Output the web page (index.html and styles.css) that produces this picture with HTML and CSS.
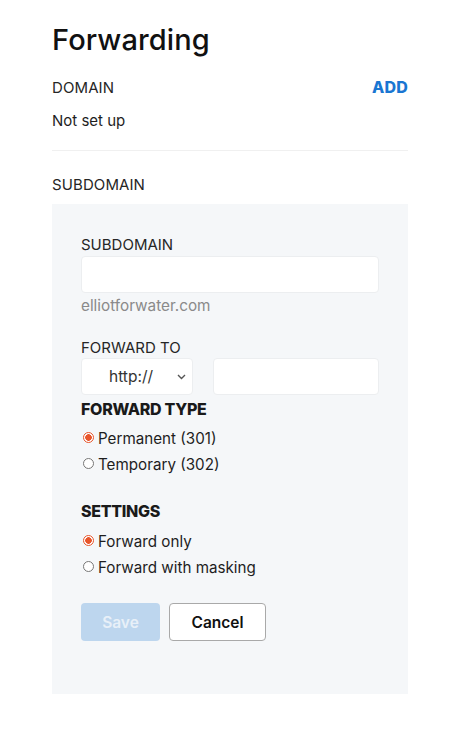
FILE: index.html
```html
<!DOCTYPE html>
<html>
<head>
<meta charset="utf-8">
<link rel="stylesheet" href="styles.css">
</head>
<body>
<div class="page">
  <h1 class="title">Forwarding</h1>
  <div class="row">
    <span class="label">DOMAIN</span>
    <a class="add">ADD</a>
  </div>
  <div class="value">Not set up</div>
  <div class="divider"></div>
  <div class="label sub-label">SUBDOMAIN</div>
  <div class="panel">
    <div class="field-label">SUBDOMAIN</div>
    <div class="input full"></div>
    <div class="hint">elliotforwater.com</div>
    <div class="field-label fwd-label">FORWARD TO</div>
    <div class="fwd-row">
      <div class="input select">
        <span class="sel-text">http://</span>
        <svg class="chev" width="9" height="6" viewBox="0 0 9 6"><path d="M1 1l3.5 3.5L8 1" fill="none" stroke="#555" stroke-width="1.4"/></svg>
      </div>
      <div class="input url"></div>
    </div>
    <div class="heading">FORWARD TYPE</div>
    <div class="radio first"><span class="dot on"></span>Permanent (301)</div>
    <div class="radio"><span class="dot"></span>Temporary (302)</div>
    <div class="heading settings">SETTINGS</div>
    <div class="radio first"><span class="dot on"></span>Forward only</div>
    <div class="radio"><span class="dot"></span>Forward with masking</div>
    <div class="buttons">
      <button class="btn save">Save</button>
      <button class="btn cancel">Cancel</button>
    </div>
  </div>
</div>
</body>
</html>
```
FILE: styles.css
```css
html, body { margin: 0; padding: 0; background: #fff; }
body { font-family: Inter, "Noto Sans", sans-serif; color: #111; }
.page { padding: 20px 66px 40px 52px; }
.title { margin: 0; font-family: Inter, sans-serif; font-weight: 450; font-size: 29px; line-height: 40px; color: #111; letter-spacing: 0.1px; }
.row { display: flex; justify-content: space-between; align-items: center; margin-top: 15px; height: 24px; }
.label { font-size: 15px; color: #262626; letter-spacing: 0.1px; }
.add { font-weight: 800; font-size: 16px; color: #1976d2; letter-spacing: 0.2px; }
.value { font-size: 15px; color: #1e1e1e; margin-top: 11px; line-height: 22px; }
.divider { height: 1px; background: #f0f0f0; margin-top: 18px; }
.sub-label { margin-top: 24px; line-height: 20px; }
.panel { background: #f5f7f9; margin-top: 9px; padding: 32px 29px 53px 29px; }
.field-label { font-size: 15px; color: #262626; line-height: 18px; }
.input { background: #fff; border: 1px solid #eceef0; border-radius: 4px; box-sizing: border-box; height: 37px; }
.full { margin-top: 2px; }
.hint { font-size: 15.3px; color: #8a8a8a; margin-top: 3px; line-height: 20px; }
.fwd-label { margin-top: 23px; }
.fwd-row { display: flex; gap: 20px; margin-top: 1px; }
.select { width: 112px; display: flex; align-items: center; justify-content: space-between; padding: 0 6px 0 27px; }
.sel-text { font-size: 15.5px; color: #333; }
.url { flex: 1; }
.heading { font-weight: 800; font-size: 16px; color: #1a1a1a; letter-spacing: -0.3px; margin-top: 5px; line-height: 18px; }
.settings { margin-top: 24px; }
.radio { display: flex; align-items: center; font-size: 15.2px; color: #1e1e1e; height: 26.5px; }
.radio.first { margin-top: 7px; }
.settings + .radio.first { margin-top: 8px; }
.dot { width: 9px; height: 9px; border: 1.5px solid #777; border-radius: 50%; margin: 0 4px 0 2px; background: #fff; box-sizing: content-box; position: relative; top: -1px; }
.dot.on { border-color: #e8552b; background: radial-gradient(circle, #e8552b 0 3px, #fff 3.6px); }
.buttons { display: flex; gap: 9px; margin-top: 22px; }
.btn { font-family: Inter, sans-serif; font-size: 15.5px; font-weight: 600; height: 38px; border-radius: 4px; box-sizing: border-box; }
.save { width: 79px; background: #bdd6ee; color: #e8f0f8; border: none; }
.cancel { width: 97px; background: #fff; color: #111; border: 1px solid #a9a9a9; }
```
